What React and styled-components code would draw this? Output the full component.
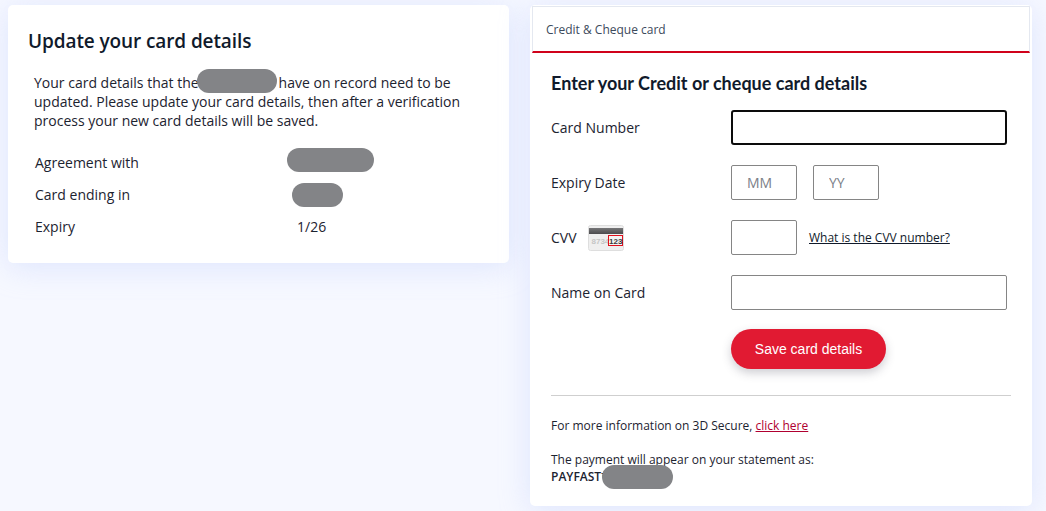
import React from "react";
import styled, { createGlobalStyle } from "styled-components";

const GlobalStyle = createGlobalStyle`
  html, body {
    margin: 0;
    padding: 0;
    background: #f6f8ff;
  }
  * {
    box-sizing: border-box;
  }
  body {
    font-family: "Open Sans", sans-serif;
    color: #1c2330;
  }
`;

const Page = styled.div`
  display: flex;
  align-items: flex-start;
  gap: 21px;
  width: 1046px;
  height: 511px;
  padding: 5px 14px 0 8px;
  overflow: hidden;
`;

const SummaryCard = styled.section`
  width: 501px;
  height: 258px;
  padding: 22px 20px 0;
  background: #fff;
  border-radius: 5px;
  box-shadow: 0 4px 30px rgba(185, 200, 250, 0.4);
`;

const SummaryTitle = styled.h1`
  margin: 0 0 18px;
  font-size: 19px;
  font-weight: 600;
  letter-spacing: -0.1px;
  line-height: 28px;
  color: #101a2b;
`;

const Intro = styled.p`
  margin: 0 0 16px 6px;
  width: 440px;
  font-size: 14px;
  line-height: 19px;
`;

const Redacted = styled.span`
  display: inline-block;
  width: ${(props) => props.$width}px;
  height: 24px;
  border-radius: 12px;
  background: #838487;
  transform: translateY(${(props) => props.$shift || 0}px);
`;

const InlineRedacted = styled(Redacted)`
  margin: -4px 2px -4px -2px;
  vertical-align: middle;
`;

const Details = styled.dl`
  display: grid;
  grid-template-columns: 252px 1fr;
  grid-auto-rows: 32px;
  align-items: center;
  margin: 0 0 0 7px;
  font-size: 14px;
`;

const Term = styled.dt`
  margin: 0;
`;

const Value = styled.dd`
  margin: 0 0 0 ${(props) => props.$indent || 0}px;
  display: flex;
  align-items: center;
`;

const PaymentCard = styled.section`
  width: 502px;
  height: 501px;
  background: #fff;
  border-radius: 5px;
  padding: 1px 2px 0;
  box-shadow: 0 4px 30px rgba(185, 200, 250, 0.4);
`;

const Tab = styled.div`
  height: 47px;
  padding: 0 13px;
  display: flex;
  align-items: center;
  font-size: 12px;
  color: #3c4a5c;
  border: 1px solid #e4e8f0;
  border-bottom: 2px solid #d0021b;
`;

const Form = styled.div`
  padding: 18px 19px 0;
`;

const FormTitle = styled.h2`
  margin: 0 0 15px;
  font-family: Lato, sans-serif;
  font-size: 18px;
  font-weight: 700;
  line-height: 24px;
  color: #101a2b;
`;

const Row = styled.div`
  display: grid;
  grid-template-columns: 180px 1fr;
  align-items: center;
  height: 35px;
  margin-bottom: 20px;
  font-size: 14px;
`;

const Label = styled.label`
  display: flex;
  align-items: center;
  gap: 11px;
`;

const Controls = styled.div`
  display: flex;
  align-items: center;
  gap: ${(props) => props.$gap}px;
`;

const Field = styled.input`
  width: ${(props) => props.$width}px;
  height: 35px;
  padding: 0 15px;
  background: #fff;
  border: 1px solid #858585;
  border-radius: 2px;
  font-family: "Open Sans", sans-serif;
  font-size: 14px;
  outline: none;

  &::placeholder {
    color: #7b8088;
    opacity: 1;
  }
`;

const FocusedField = styled(Field)`
  border: 2px solid #0c0c0c;
  border-radius: 3px;
`;

const HelpLink = styled.a`
  font-size: 12px;
  color: #101a2b;
  text-decoration: underline;
`;

const Actions = styled.div`
  margin: -1px 0 0 180px;
`;

const SaveButton = styled.button`
  width: 155px;
  height: 40px;
  border: 0;
  border-radius: 20px;
  background: #e11a32;
  color: #fff;
  font-family: "Liberation Sans", Arial, sans-serif;
  font-size: 14px;
  box-shadow: 0 4px 10px rgba(60, 60, 80, 0.25);
`;

const Divider = styled.hr`
  width: 460px;
  margin: 26px 0 21px;
  border: 0;
  border-top: 1px solid #cfcfcf;
`;

const Note = styled.p`
  margin: 0 0 17px;
  font-size: 12px;
  line-height: 17px;
  color: #1c2330;

  a {
    color: #b00030;
  }
`;

const Merchant = styled.strong`
  display: flex;
  align-items: center;
  height: 17px;
  font-weight: 600;
`;

const MerchantRedacted = styled(Redacted)`
  margin-left: -6px;
  width: 71px;
`;

function CvvIcon() {
  return (
    <svg width="36" height="26" viewBox="0 0 36 26" aria-hidden="true">
      <defs>
        <linearGradient id="stripe" x1="0" y1="0" x2="0" y2="1">
          <stop offset="0" stopColor="#767678" />
          <stop offset="1" stopColor="#4c4c4e" />
        </linearGradient>
      </defs>
      <rect x="0.5" y="0.5" width="35" height="25" rx="2" fill="#efefef" stroke="#dedede" />
      <rect x="1" y="3" width="34" height="6" fill="url(#stripe)" />
      <text x="3.5" y="18.5" fontFamily="Liberation Sans, sans-serif" fontSize="8" fontWeight="700" fill="#c6c6c6">
        8734
      </text>
      <rect x="20.5" y="10.5" width="14" height="10" fill="#f4f4f4" stroke="#e0101c" />
      <text x="21" y="18.5" fontFamily="Liberation Sans, sans-serif" fontSize="8" fontWeight="700" fill="#3a3a3a">
        123
      </text>
    </svg>
  );
}

export default function App() {
  return (
    <Page>
      <GlobalStyle />
      <SummaryCard>
        <SummaryTitle>Update your card details</SummaryTitle>
        <Intro>
          Your card details that the
          <InlineRedacted $width={80} $shift={-3} />
          have on record need to be updated. Please update your card details, then after a
          verification process your new card details will be saved.
        </Intro>
        <Details>
          <Term>Agreement with</Term>
          <Value>
            <Redacted $width={87} $shift={-2} />
          </Value>
          <Term>Card ending in</Term>
          <Value $indent={5}>
            <Redacted $width={51} $shift={1} />
          </Value>
          <Term>Expiry</Term>
          <Value $indent={10}>1/26</Value>
        </Details>
      </SummaryCard>

      <PaymentCard>
        <Tab>Credit &amp; Cheque card</Tab>
        <Form>
          <FormTitle>Enter your Credit or cheque card details</FormTitle>
          <Row>
            <Label>Card Number</Label>
            <FocusedField $width={276} />
          </Row>
          <Row>
            <Label>Expiry Date</Label>
            <Controls $gap={16}>
              <Field $width={66} placeholder="MM" />
              <Field $width={66} placeholder="YY" />
            </Controls>
          </Row>
          <Row>
            <Label>
              CVV
              <CvvIcon />
            </Label>
            <Controls $gap={12}>
              <Field $width={66} />
              <HelpLink href="#">What is the CVV number?</HelpLink>
            </Controls>
          </Row>
          <Row>
            <Label>Name on Card</Label>
            <Field $width={276} />
          </Row>
          <Actions>
            <SaveButton>Save card details</SaveButton>
          </Actions>
          <Divider />
          <Note>
            For more information on 3D Secure, <a href="#">click here</a>
          </Note>
          <Note>
            The payment will appear on your statement as:
            <Merchant>
              PAYFAST*
              <MerchantRedacted />
            </Merchant>
          </Note>
        </Form>
      </PaymentCard>
    </Page>
  );
}
